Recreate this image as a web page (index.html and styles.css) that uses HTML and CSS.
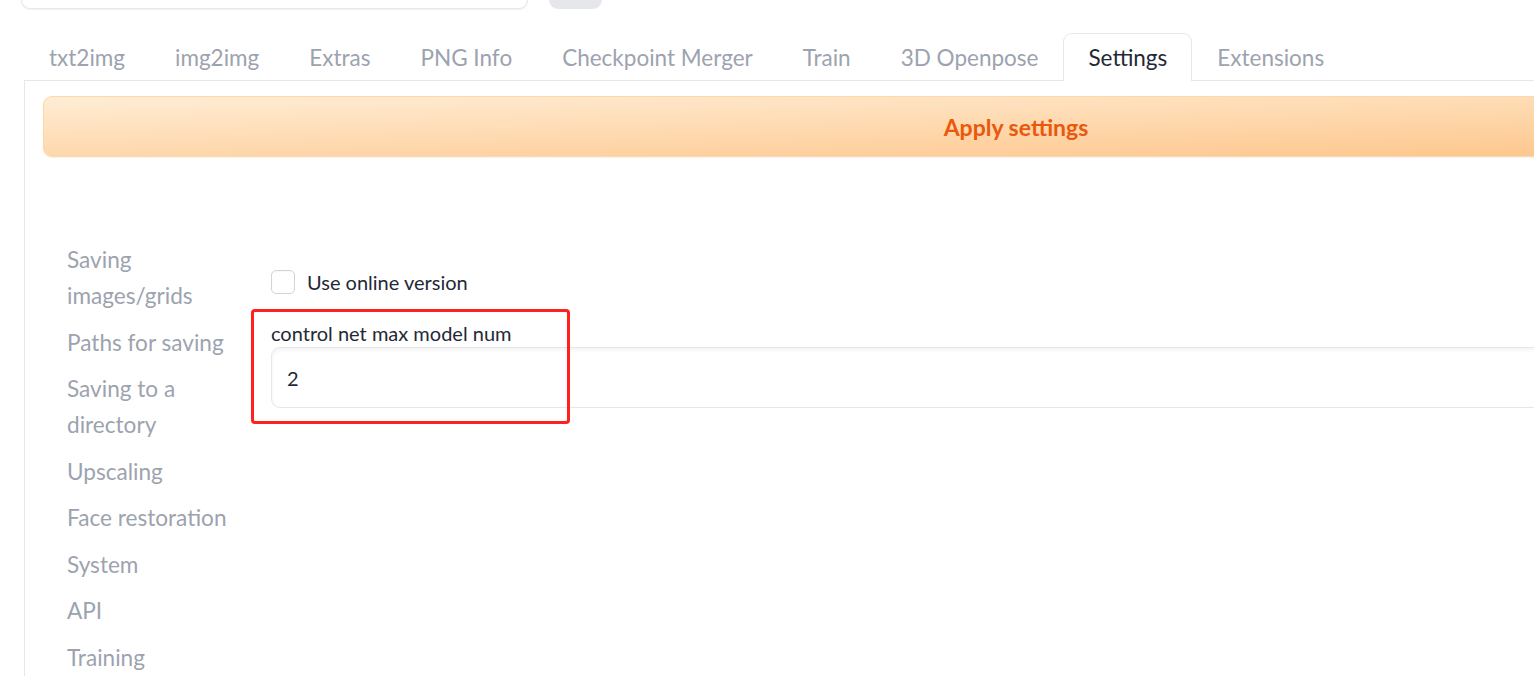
FILE: index.html
```html
<!DOCTYPE html>
<html>
<head>
<meta charset="utf-8">
<link rel="stylesheet" href="styles.css">
</head>
<body>
<div class="topbar">
  <div class="search"></div>
  <div class="greybtn"></div>
</div>
<div class="tabs">
  <div class="tabnav">
    <div class="tab">txt2img</div>
    <div class="tab">img2img</div>
    <div class="tab">Extras</div>
    <div class="tab">PNG Info</div>
    <div class="tab">Checkpoint Merger</div>
    <div class="tab">Train</div>
    <div class="tab">3D Openpose</div>
    <div class="tab active">Settings</div>
    <div class="tab">Extensions</div>
  </div>
  <div class="panel">
    <button class="apply">Apply settings</button>
    <div class="settings">
      <div class="sidebar">
        <div class="item">Saving images/grids</div>
        <div class="item">Paths for saving</div>
        <div class="item">Saving to a directory</div>
        <div class="item">Upscaling</div>
        <div class="item">Face restoration</div>
        <div class="item">System</div>
        <div class="item">API</div>
        <div class="item">Training</div>
      </div>
      <div class="content">
        <label class="check"><span class="box"></span><span class="check-label">Use online version</span></label>
        <div class="field">
          <div class="field-label">control net max model num</div>
          <div class="input">2</div>
        </div>
        <div class="annot"></div>
      </div>
    </div>
  </div>
</div>
</body>
</html>
```
FILE: styles.css
```css
html, body {
  margin: 0;
  padding: 0;
  overflow: hidden;
  background: #ffffff;
  font-family: "Lato", "Liberation Sans", sans-serif;
}

.topbar {
  display: flex;
  align-items: flex-end;
  margin-top: -32px;
  padding-left: 21px;
}

.search {
  width: 505px;
  height: 39px;
  border: 1px solid #e5e7eb;
  border-radius: 9px;
  box-shadow: 0 1px 2px rgba(0,0,0,0.06);
  background: #fff;
}

.greybtn {
  width: 53px;
  height: 41px;
  margin-left: 21px;
  border-radius: 9px;
  background: #e5e7eb;
}

.tabs {
  margin: 24px 0 0 24px;
}

.tabnav {
  display: flex;
  height: 47px;
  border-bottom: 1px solid #e5e7eb;
}

.tab {
  padding: 2px 25px 0;
  line-height: 45px;
  font-size: 22.5px;
  color: #9ca3af;
  white-space: nowrap;
}

.tab.active {
  padding: 2px 24px 0;
  border: 1px solid #e5e7eb;
  border-bottom: none;
  border-radius: 9px 9px 0 0;
  background: #fff;
  color: #1f2937;
  height: 45px;
  line-height: 44px;
  position: relative;
  z-index: 1;
}

.panel {
  border-left: 1px solid #e5e7eb;
  padding: 15px 0 0 18px;
  height: 700px;
}

.apply {
  display: block;
  width: 1946px;
  height: 61px;
  border: 1px solid #fed7aa;
  border-radius: 9px;
  background: linear-gradient(to bottom right, #ffedd5, #fdba74e0);
  box-shadow: 0 1px 2px rgba(0,0,0,0.05);
  color: #ea580c;
  font-family: "Lato", "Liberation Sans", sans-serif;
  font-size: 23px;
  font-weight: 700;
  padding: 0;
}

.settings {
  display: flex;
  margin-top: 80px;
}

.sidebar {
  width: 180px;
  padding-left: 24px;
  flex-shrink: 0;
}

.item {
  font-size: 22.6px;
  line-height: 36px;
  padding: 5px 0 5.5px;
  color: #9ca3af;
}

.content {
  position: relative;
  margin-left: 24px;
  padding-top: 33px;
  flex: 1;
}

.check {
  display: flex;
  align-items: center;
  height: 24px;
}

.box {
  width: 22px;
  height: 22px;
  border: 1px solid #d1d5db;
  border-radius: 5px;
  background: #fff;
  box-shadow: inset 0 1px 2px rgba(0,0,0,0.04);
}

.check-label {
  margin-left: 12px;
  font-size: 20px;
  color: #1f2937;
}

.field {
  margin-top: 27px;
}

.field-label {
  font-size: 20px;
  line-height: 24px;
  color: #1f2937;
}

.input {
  margin-top: 2px;
  width: 1400px;
  height: 59px;
  border: 1px solid #e5e7eb;
  border-radius: 9px;
  box-shadow: inset 0 2px 4px rgba(0,0,0,0.05);
  padding-left: 15px;
  line-height: 61px;
  font-size: 20px;
  color: #1f2937;
}

.annot {
  position: absolute;
  left: -20px;
  top: 72px;
  width: 313px;
  height: 109px;
  border: 3px solid #ff2020;
  border-radius: 4px;
}
```
